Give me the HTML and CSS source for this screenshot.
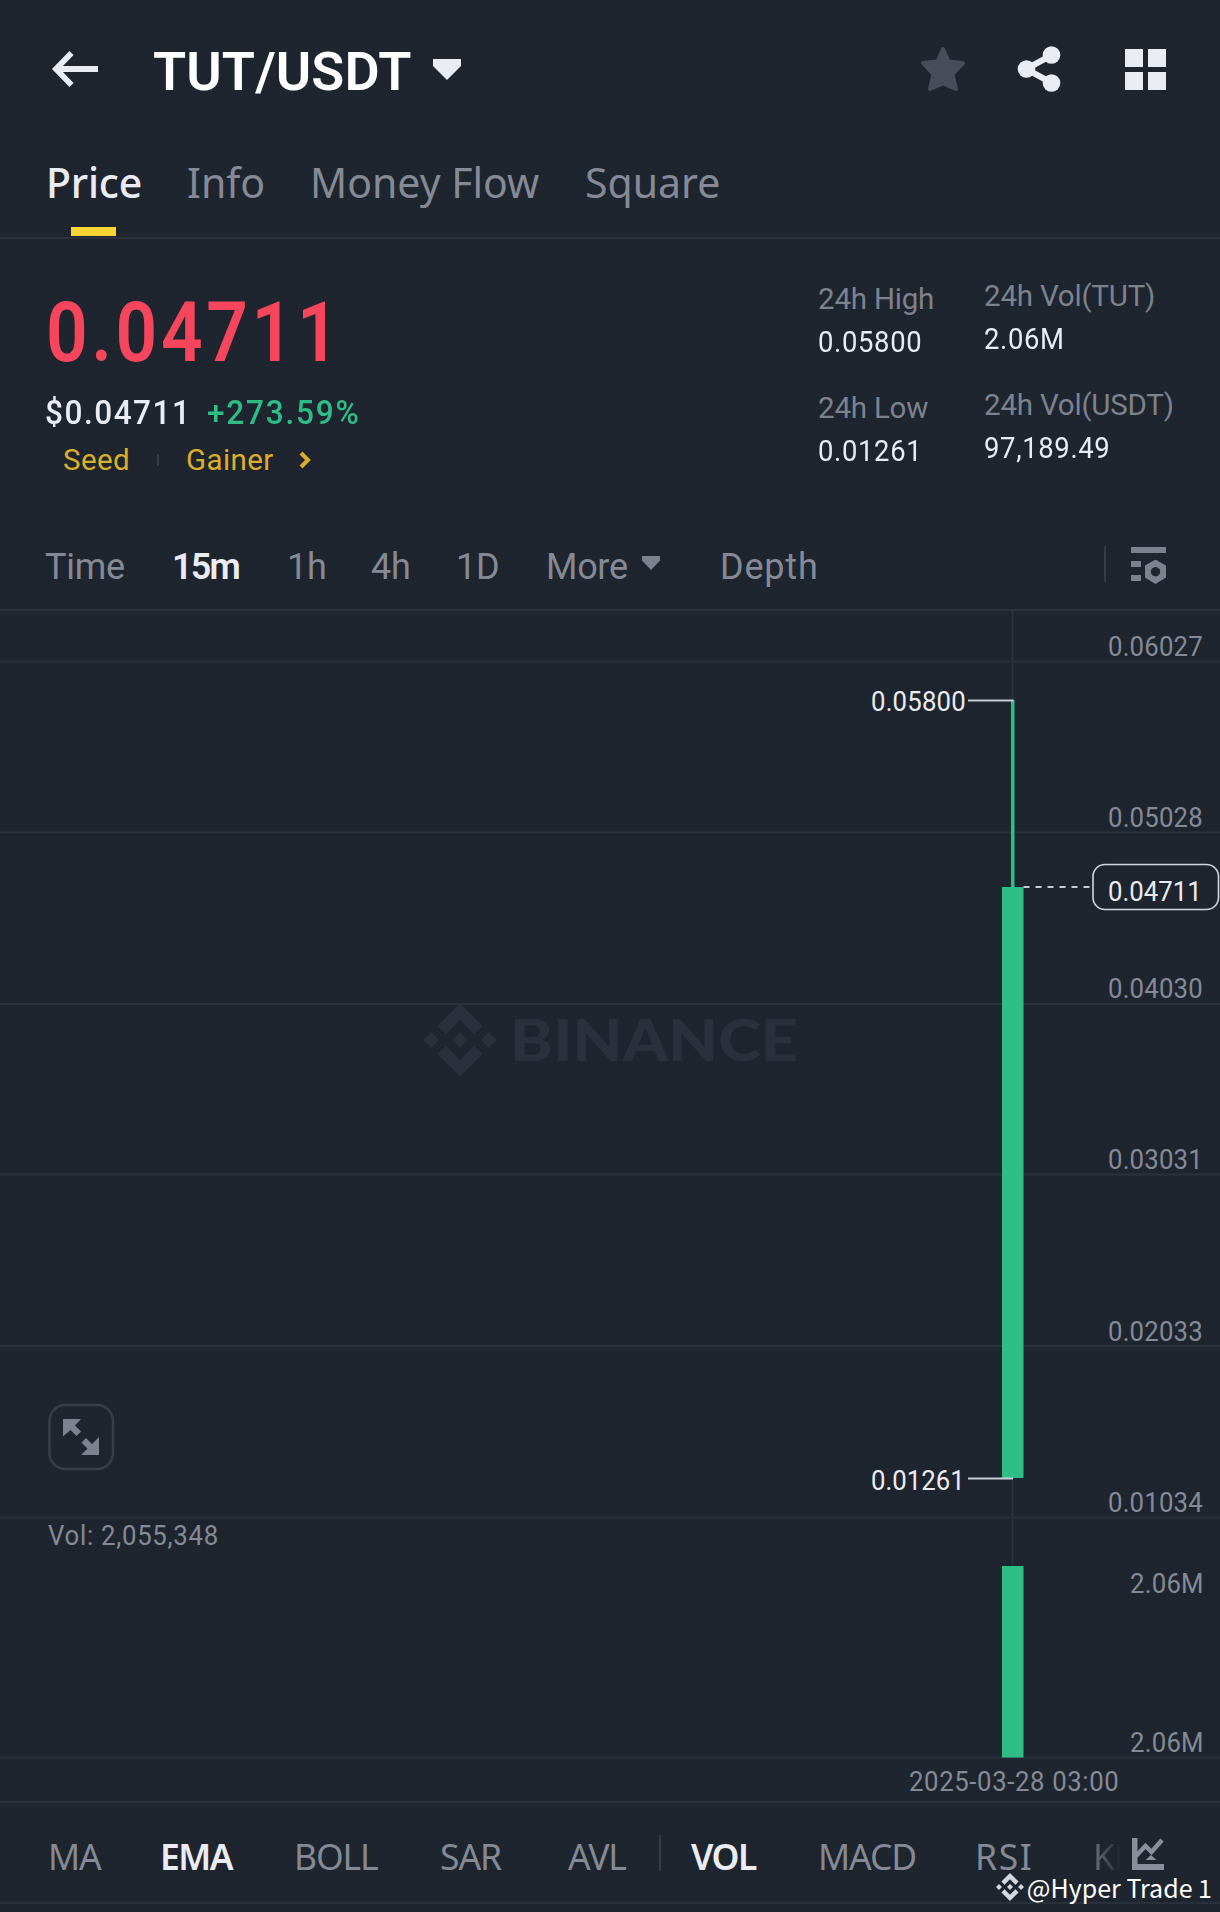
FILE: index.html
```
<!DOCTYPE html>
<html lang="en">
<head>
<meta charset="utf-8">
<title>TUT/USDT</title>
<link rel="stylesheet" href="styles.css">
</head>
<body>
<svg width="0" height="0" class="defs">
  <symbol id="logo" viewBox="0 0 126.6 126.6">
    <path d="M38.7 53.2L63.3 28.6l24.6 24.6 14.3-14.3L63.3 0 24.4 38.9zM0 63.3L13.5 49.8 27 63.3 13.5 76.800zM38.7 73.4L63.3 98l24.6-24.6 14.3 14.3-38.9 38.9-38.9-38.9zM99.6 63.3l13.5-13.5 13.5 13.5-13.5 13.5zM76.8 63.3L63.3 49.8 49.8 63.3l13.5 13.5z"/>
  </symbol>
</svg>
<header class="header">
  <svg class="back" width="48" height="38" viewBox="0 0 48 38"><path d="M47 19H6M20.500 3L5 19l15.500 16" fill="none" stroke="#eaecf2" stroke-width="5.800"/></svg>
  <h1 class="pair">TUT/USDT</h1>
  <svg class="caret" width="28" height="21" viewBox="0 0 28 21"><path d="M0 0h28v7L14 21 0 7z" fill="#eaecf2"/></svg>
  <div class="actions">
    <svg width="46" height="46" viewBox="0 0 46 46"><path d="M23 3l5.500 12.500 14.500 1.500-10.500 11 3.500 15L23 37.500 10 43l3.500-15L3 17l14.500-1.500z" fill="#474d59" stroke="#474d59" stroke-width="4" stroke-linejoin="round"/></svg>
    <svg width="44" height="46" viewBox="0 0 44 46"><path d="M35 9L9 23l26 14" fill="none" stroke="#eaecf2" stroke-width="6"/><circle cx="9.500" cy="23" r="8.800" fill="#eaecf2"/><circle cx="34.500" cy="9" r="8.800" fill="#eaecf2"/><circle cx="34.500" cy="37" r="8.800" fill="#eaecf2"/></svg>
    <svg width="41" height="41" viewBox="0 0 41 41"><path d="M0 0h18v18H0zM23 0h18v18H23zM0 23h18v18H0zM23 23h18v18H23z" fill="#eaecf2"/></svg>
  </div>
</header>
<nav class="tabs">
  <span class="tab active">Price</span><span class="tab">Info</span><span class="tab">Money Flow</span><span class="tab">Square</span>
</nav>
<section class="quote">
  <div class="last">
    <div class="price">0.04711</div>
    <div class="change"><span class="usd">$0.04711</span><span class="up">+273.59%</span></div>
    <div class="tags"><span>Seed</span><i class="bar"></i><span>Gainer</span><svg width="13" height="18" viewBox="0 0 13 18"><path d="M2 2l7 7-7 7" fill="none" stroke="#dcae2e" stroke-width="4"/></svg></div>
  </div>
  <div class="stats">
    <dl><dt>24h High</dt><dd>0.05800</dd></dl>
    <dl><dt>24h Low</dt><dd>0.01261</dd></dl>
  </div>
  <div class="stats volume">
    <dl><dt>24h Vol(TUT)</dt><dd>2.06M</dd></dl>
    <dl><dt>24h Vol(USDT)</dt><dd>97,189.49</dd></dl>
  </div>
</section>
<nav class="intervals">
  <span>Time</span><span class="active">15m</span><span>1h</span><span>4h</span><span>1D</span>
  <span class="more">More<svg width="18" height="14" viewBox="0 0 18 14"><path d="M0 0h18v4.500L9 14 0 4.500z" fill="#7d828e"/></svg></span>
  <span>Depth</span><i class="bar"></i>
  <svg class="settings" width="36" height="37" viewBox="0 0 36 37"><path d="M0 0h35v6H0zM0 14h10v6H0zM0 28h10v6H0z" fill="#7d828e"/><path fill-rule="evenodd" d="M24.500 12.500L35 18.500v12L24.500 37 14 30.500v-12zM24.500 20a4.700 4.700 0 1 0 .01 0z" fill="#7d828e"/></svg>
</nav>
<svg class="chart" width="1220" height="1190" viewBox="0 611 1220 1190">
  <g fill="#2b313c"><use href="#logo" x="423.500" y="1003" width="73" height="74"/>
    <text class="brand" x="510" y="1060.500" textLength="288" lengthAdjust="spacingAndGlyphs">BINANCE</text></g>
  <g class="grid">
    <path d="M0 661.500h1220M0 832.500h1220M0 1004h1220M0 1174.500h1220M0 1346h1220M0 1517.500h1220M0 1757.500h1220"/>
    <path d="M1012.500 611v1147"/>
  </g>
  <path d="M1011 700h3.500v187h9v591h-21.500V887h9z" fill="#2ebd85"/>
  <path d="M1002 1566h21.500v191.500H1002z" fill="#2ebd85"/>
  <path d="M968 700.500h45.500M968 1478.500h45" stroke="#c9ccd4" stroke-width="2"/>
  <path d="M1023.500 887H1090" stroke="#c9ccd4" stroke-width="2" stroke-dasharray="6 6"/>
  <g class="axis">
    <text x="1108" y="656" textLength="103">0.06027</text>
    <text x="1108" y="827" textLength="103">0.05028</text>
    <text x="1108" y="998" textLength="103">0.04030</text>
    <text x="1108" y="1169" textLength="103">0.03031</text>
    <text x="1108" y="1341" textLength="103">0.02033</text>
    <text x="1108" y="1512" textLength="103">0.01034</text>
    <text x="1130" y="1593" textLength="80">2.06M</text>
    <text x="1130" y="1752" textLength="80">2.06M</text>
    <text x="48" y="1545" textLength="185">Vol: 2,055,348</text>
    <text x="909" y="1791" textLength="228">2025-03-28 03:00</text>
  </g>
  <rect x="1093" y="864.500" width="125.500" height="45" rx="12" fill="#1f252f" stroke="#d3d6dd" stroke-width="1.600"/>
  <g class="axis light">
    <text x="871" y="711" textLength="103">0.05800</text>
    <text x="871" y="1490" textLength="102">0.01261</text>
    <text x="1108" y="901" textLength="102">0.04711</text>
  </g>
  <rect x="49.500" y="1405" width="63.500" height="64" rx="16" fill="none" stroke="#383e49" stroke-width="2.500"/>
  <path d="M63 1419h18l-6 6.500 6 6-4.500 4.500-6-6-7.500 6.500zM99 1455H81l6.500-6.500-6-6 4.500-4.500 6 6 7-7z" fill="#7d828e"/>
</svg>
<nav class="indicators">
  <span>MA</span><span class="active">EMA</span><span>BOLL</span><span>SAR</span><span>AVL</span><i class="bar"></i><span class="active">VOL</span><span>MACD</span><span>RSI</span><span class="fade">KDJ</span>
  <svg width="32" height="32" viewBox="0 0 32 32"><path d="M0 0h5.500v26H32v6H0z" fill="#8a8f9b"/><path d="M4 18l9.500-10 6 6L30 2" fill="none" stroke="#8a8f9b" stroke-width="4.500"/><path d="M19 17l5.500 5h-11z" fill="#8a8f9b"/></svg>
</nav>
<div class="credit"><svg width="28" height="28"><use href="#logo" width="28" height="28"/></svg><span>@Hyper Trade 1</span></div>
</body>
</html>
```
FILE: styles.css
```
* { box-sizing: border-box; }
body {
  margin: 0;
  width: 1220px;
  height: 1912px;
  overflow: hidden;
  position: relative;
  background: #1f252f;
  color: #eaecf2;
  font-family: Roboto, sans-serif;
}
svg { display: block; flex: none; }
.defs { position: absolute; }
.bar { background: #363c47; width: 2px; }

.header { display: flex; align-items: center; height: 138px; padding: 0 54px 0 51px; }
.pair { margin: 0 0 0 54px; padding-top: 5px; width: 280px; font-size: 54px; line-height: 64px; font-weight: 600; color: #fff; letter-spacing: .1px; }
.actions { display: flex; align-items: center; margin-left: auto; }
.actions svg + svg { margin-left: 51px; }
.actions svg + svg + svg { margin-left: 64px; }

.tabs {
  display: grid;
  grid-template-columns: 141px 123px 275px auto;
  height: 101px;
  padding: 0 0 0 46px;
  border-bottom: 2px solid #2c323d;
  font: 400 41px/88px "Noto Sans", sans-serif;
  color: #858a96;
  letter-spacing: 0;
}
.tabs .active { position: relative; color: #eaecf2; font-weight: 500; letter-spacing: -.2px; }
.tabs .active::after { content: ""; position: absolute; left: 25px; bottom: 1px; width: 45px; height: 9px; background: #fcd535; }

.quote { display: flex; height: 284px; padding: 37px 0 0 45px; }
.last { width: 773px; padding-top: 9px; }
.price { font-size: 83px; line-height: 96px; font-weight: 600; color: #f6465d; letter-spacing: 4.1px; transform: scaleX(.88); transform-origin: left; padding-left: 1px; }
.change { display: flex; margin-top: 7px; font-size: 34px; line-height: 48px; font-weight: 500; letter-spacing: 1.6px; }
.change span { transform: scaleX(.93); transform-origin: left; white-space: nowrap; }
.usd { width: 162px; }
.up { color: #2ebd85; letter-spacing: 1.9px; }
.tags { display: flex; align-items: center; margin-top: 4px; padding-left: 18px; font-size: 29.5px; line-height: 40px; color: #dcae2e; letter-spacing: .4px; }
.tags span:first-child { width: 94px; }
.tags .bar { height: 12px; margin-right: 27px; }
.tags span:nth-of-type(2) { width: 113px; }
.stats { width: 166px; padding-top: 3px; font-size: 29.5px; line-height: 40px; letter-spacing: -.2px; white-space: nowrap; }
.stats.volume { width: auto; padding-top: 0; }
.stats dl { margin: 0 0 26px; }
.stats dt { color: #7d828e; }
.stats dd { margin: 3px 0 0; letter-spacing: .7px; transform: scaleX(.93); transform-origin: left; }

.intervals {
  display: grid;
  grid-template-columns: 127px 115px 84px 85px 90px 174px 384px 27px auto;
  height: 88px;
  padding: 1px 0 0 45px;
  border-bottom: 2px solid #2c323d;
  font-size: 36px;
  line-height: 87px;
  color: #858a96;
  letter-spacing: -.3px;
}
.intervals .active { color: #eaecf2; font-weight: 600; letter-spacing: -1.8px; }
.intervals span:nth-of-type(7) { letter-spacing: .8px; }
.more { display: flex; }
.more svg { margin: 32px 0 0 14px; }
.intervals .bar { height: 36px; margin-top: 22px; }
.settings { margin-top: 23px; }

.chart { font-family: Roboto, sans-serif; }
.brand { font: 900 57px Lato, sans-serif; }
.grid { stroke: #2c323c; stroke-width: 2; }
.axis { font-size: 28px; fill: #858a96; }
.axis text { transform: scaleX(.92); transform-box: fill-box; transform-origin: left; }
.axis.light { fill: #eaecf2; }

.indicators {
  display: grid;
  grid-template-columns: 112px 134px 146px 128px 91px 32px 127px 157px 118px 39px auto;
  height: 103px;
  padding: 4px 0 0 48px;
  border-top: 2px solid #2c323d;
  border-bottom: 2px solid #2a303a;
  font: 400 35.5px/98px "Noto Sans", sans-serif;
  color: #858a96;
  letter-spacing: -1.1px;
}
.indicators .active { color: #eaecf2; font-weight: 600; letter-spacing: -1.5px; }
.indicators span:nth-of-type(8) { letter-spacing: 1.6px; }
.indicators .bar { height: 36px; margin-top: 28px; }
.indicators svg { margin-top: 31px; }
.fade { width: 28px; height: 48px; margin-top: 25px; line-height: 48px; overflow: hidden; background: linear-gradient(90deg, #6c717d, #1f252f); -webkit-background-clip: text; background-clip: text; color: transparent; }

.credit {
  position: absolute;
  right: 8px;
  bottom: 10px;
  display: flex;
  align-items: center;
  gap: 3px;
  font: 25px/30px "Noto Sans CJK SC", sans-serif;
  color: #fff;
}
.credit svg { fill: #d6d8de; }
```
